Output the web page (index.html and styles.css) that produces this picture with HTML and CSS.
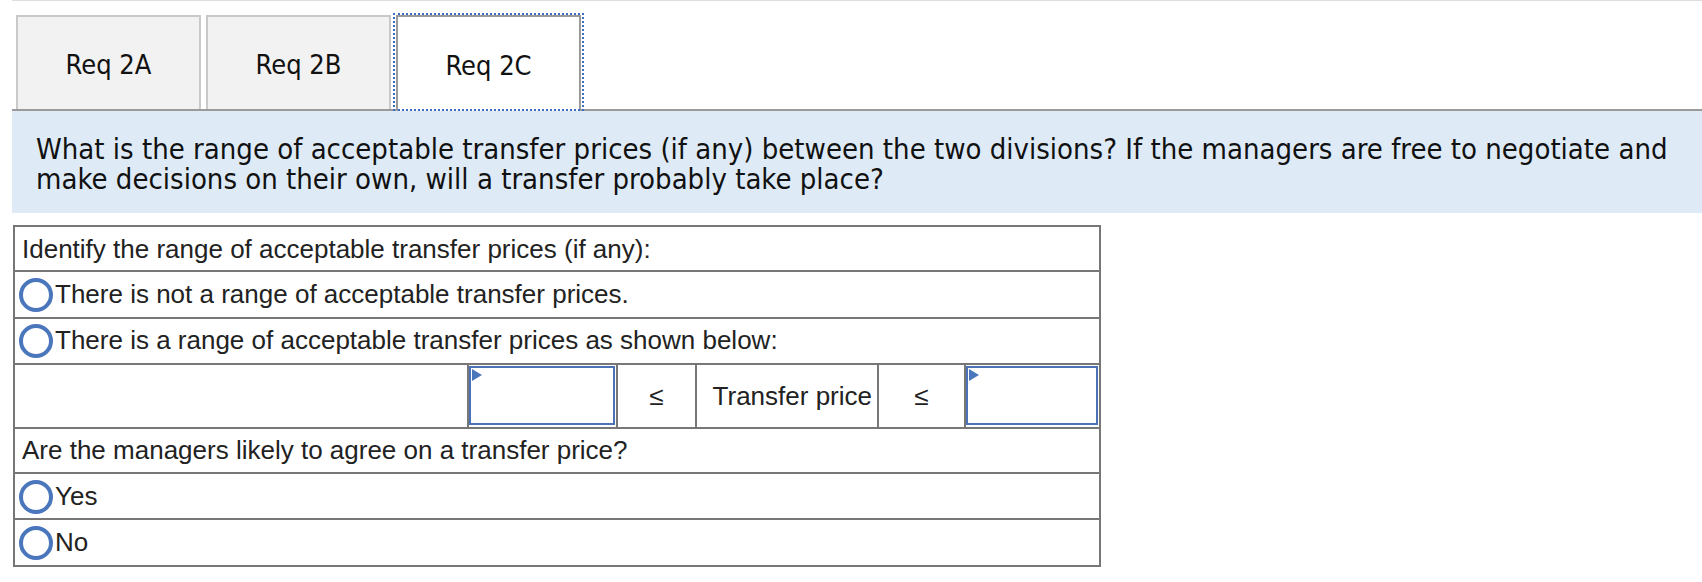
FILE: index.html
```html
<!DOCTYPE html>
<html>
<head>
<meta charset="utf-8">
<link rel="stylesheet" href="styles.css">
</head>
<body>
<div class="page">
  <div class="topline"></div>
  <div class="tabs">
    <div class="tab">Req 2A</div>
    <div class="tab">Req 2B</div>
    <div class="tab active">Req 2C</div>
  </div>
  <div class="question">What is the range of acceptable transfer prices (if any) between the two divisions? If the managers are free to negotiate and make decisions on their own, will a transfer probably take place?</div>
  <table class="answer">
    <colgroup>
      <col class="c1"><col class="c2"><col class="c3"><col class="c4"><col class="c5"><col class="c6">
    </colgroup>
    <tr><td colspan="6" class="text">Identify the range of acceptable transfer prices (if any):</td></tr>
    <tr><td colspan="6" class="opt"><span class="radio"></span>There is not a range of acceptable transfer prices.</td></tr>
    <tr><td colspan="6" class="opt"><span class="radio"></span>There is a range of acceptable transfer prices as shown below:</td></tr>
    <tr class="inrow">
      <td></td>
      <td class="incell"><div class="input"><span class="flag"></span></div></td>
      <td class="sym">≤</td>
      <td class="lbl">Transfer price</td>
      <td class="sym">≤</td>
      <td class="incell"><div class="input"><span class="flag"></span></div></td>
    </tr>
    <tr><td colspan="6" class="text">Are the managers likely to agree on a transfer price?</td></tr>
    <tr><td colspan="6" class="opt"><span class="radio"></span>Yes</td></tr>
    <tr><td colspan="6" class="opt"><span class="radio"></span>No</td></tr>
  </table>
</div>
</body>
</html>
```
FILE: styles.css
```css
html, body {
  margin: 0;
  padding: 0;
  background: #fff;
}
.page {
  padding-left: 12px;
}
.topline {
  height: 1px;
  background: #dedede;
}
.tabs {
  display: flex;
  gap: 5px;
  padding: 14px 0 0 4px;
  border-bottom: 2px solid #9a9a9a;
  height: 94px;
}
.tab {
  position: relative;
  width: 185px;
  box-sizing: border-box;
  height: 94px;
  border: 2px solid #c9c9c9;
  border-bottom: 0;
  background: #f2f2f2;
  display: flex;
  align-items: center;
  justify-content: center;
  padding-top: 3px;
  font-family: "DejaVu Sans Condensed", "DejaVu Sans", sans-serif;
  font-size: 27px;
  color: #111;
}
.tab.active {
  background: #fff;
  border-color: #9a9a9a;
  height: 96px;
  margin-bottom: -2px;
}
.tab.active::after {
  content: "";
  position: absolute;
  left: -5px;
  right: -5px;
  top: -4px;
  bottom: 0;
  border: 2px dotted #3a6fc4;
}
.question {
  background: #deebf7;
  padding: 24px 24px 19px;
  font-family: "DejaVu Sans Condensed", "DejaVu Sans", sans-serif;
  font-size: 29px;
  line-height: 29.5px;
  color: #111;
}
.answer {
  margin: 12px 0 0 1px;
  border-collapse: collapse;
  table-layout: fixed;
  width: 1086px;
  font-family: "Liberation Sans", Arial, sans-serif;
  font-size: 26px;
  line-height: 30px;
  color: #222;
}
.c1 { width: 454px; }
.c2 { width: 149px; }
.c3 { width: 79px; }
.c4 { width: 182px; }
.c5 { width: 87px; }
.c6 { width: 135px; }
.answer td {
  border: 2px solid #777;
  padding: 6.6px 7px;
  white-space: nowrap;
}
.answer td.opt {
  padding-left: 4px;
}
.radio {
  display: inline-block;
  box-sizing: border-box;
  width: 34px;
  height: 34px;
  border: 4px solid #4a76bb;
  border-radius: 50%;
  vertical-align: middle;
  margin: -4px 2px -2px 0;
}
.inrow td {
  height: 60px;
  padding: 0;
}
.inrow td.incell {
  height: 60px;
  padding: 1px 1px 1px 0;
}
.input {
  position: relative;
  box-sizing: border-box;
  height: 59px;
  border: 2px solid #4a72b4;
  background: #fff;
}
.flag {
  position: absolute;
  left: 1px;
  top: 1px;
  width: 0;
  height: 0;
  border-left: 10px solid #4a76bb;
  border-top: 6px solid transparent;
  border-bottom: 6px solid transparent;
}
.sym {
  text-align: center;
}
.inrow td.lbl {
  text-align: right;
  padding: 0 5px 0 2px;
}
```
